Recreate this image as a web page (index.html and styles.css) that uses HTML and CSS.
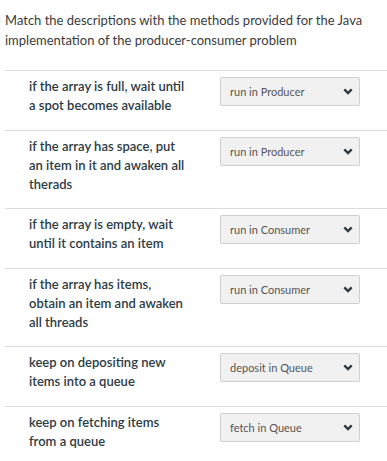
FILE: index.html
```html
<!DOCTYPE html>
<html lang="en">
<head>
    <meta charset="UTF-8">
    <meta name="viewport" content="width=device-width, initial-scale=1.0">
    <title>Matching Question</title>
    <link rel="stylesheet" href="styles.css">
</head>
<body>
    <div class="question">
        <!-- Question text -->
        <p class="question-text">Match the descriptions with the methods provided for the Java implementation of the producer-consumer problem</p>

        <!-- Answer rows -->
        <div class="answer">
            <div class="answer-label">if the array is full, wait until a spot becomes available</div>
            <div class="answer-select">
                <span>run in Producer</span>
                <svg class="chevron" width="10" height="7" viewBox="0 0 10 7"><path d="M1.3 1.3 L5 5 L8.7 1.3" fill="none" stroke="#2d3b45" stroke-width="2.4"/></svg>
            </div>
        </div>

        <div class="answer">
            <div class="answer-label">if the array has space, put an item in it and awaken all therads</div>
            <div class="answer-select">
                <span>run in Producer</span>
                <svg class="chevron" width="10" height="7" viewBox="0 0 10 7"><path d="M1.3 1.3 L5 5 L8.7 1.3" fill="none" stroke="#2d3b45" stroke-width="2.4"/></svg>
            </div>
        </div>

        <div class="answer">
            <div class="answer-label">if the array is empty, wait until it contains an item</div>
            <div class="answer-select">
                <span>run in Consumer</span>
                <svg class="chevron" width="10" height="7" viewBox="0 0 10 7"><path d="M1.3 1.3 L5 5 L8.7 1.3" fill="none" stroke="#2d3b45" stroke-width="2.4"/></svg>
            </div>
        </div>

        <div class="answer">
            <div class="answer-label">if the array has items, obtain an item and awaken all threads</div>
            <div class="answer-select">
                <span>run in Consumer</span>
                <svg class="chevron" width="10" height="7" viewBox="0 0 10 7"><path d="M1.3 1.3 L5 5 L8.7 1.3" fill="none" stroke="#2d3b45" stroke-width="2.4"/></svg>
            </div>
        </div>

        <div class="answer">
            <div class="answer-label">keep on depositing new items into a queue</div>
            <div class="answer-select">
                <span>deposit in Queue</span>
                <svg class="chevron" width="10" height="7" viewBox="0 0 10 7"><path d="M1.3 1.3 L5 5 L8.7 1.3" fill="none" stroke="#2d3b45" stroke-width="2.4"/></svg>
            </div>
        </div>

        <div class="answer">
            <div class="answer-label">keep on fetching items from a queue</div>
            <div class="answer-select">
                <span>fetch in Queue</span>
                <svg class="chevron" width="10" height="7" viewBox="0 0 10 7"><path d="M1.3 1.3 L5 5 L8.7 1.3" fill="none" stroke="#2d3b45" stroke-width="2.4"/></svg>
            </div>
        </div>
    </div>
</body>
</html>
```

FILE: styles.css
```css
/* General Styles */
body {
    margin: 0;
    font-family: Lato, "Liberation Sans", sans-serif;
    background: #fff;
    color: #2d3b45;
}

.question {
    padding: 0 0 0 5px;
}

/* Question text */
.question-text {
    margin: 0;
    padding: 10px 0 20px;
    font-size: 13px;
    line-height: 20px;
    color: #3b3b3b;
}

/* Answer rows */
.answer {
    display: flex;
    align-items: flex-start;
    border-top: 1px solid #dcdcdc;
    padding: 6px 0 14.5px;
}

.answer-label {
    width: 158px;
    margin-left: 24px;
    font-size: 13px;
    font-weight: 600;
    line-height: 19px;
    color: #2d3b45;
}

/* Select box */
.answer-select {
    margin-left: 33px;
    width: 123px;
    height: 27px;
    display: flex;
    align-items: center;
    justify-content: space-between;
    padding: 0 6px 0 9px;
    background: #f1f1f1;
    border: 1px solid #cfcfcf;
    border-radius: 2px;
    font-size: 11px;
    color: #555;
}

.chevron {
    display: block;
}
```
